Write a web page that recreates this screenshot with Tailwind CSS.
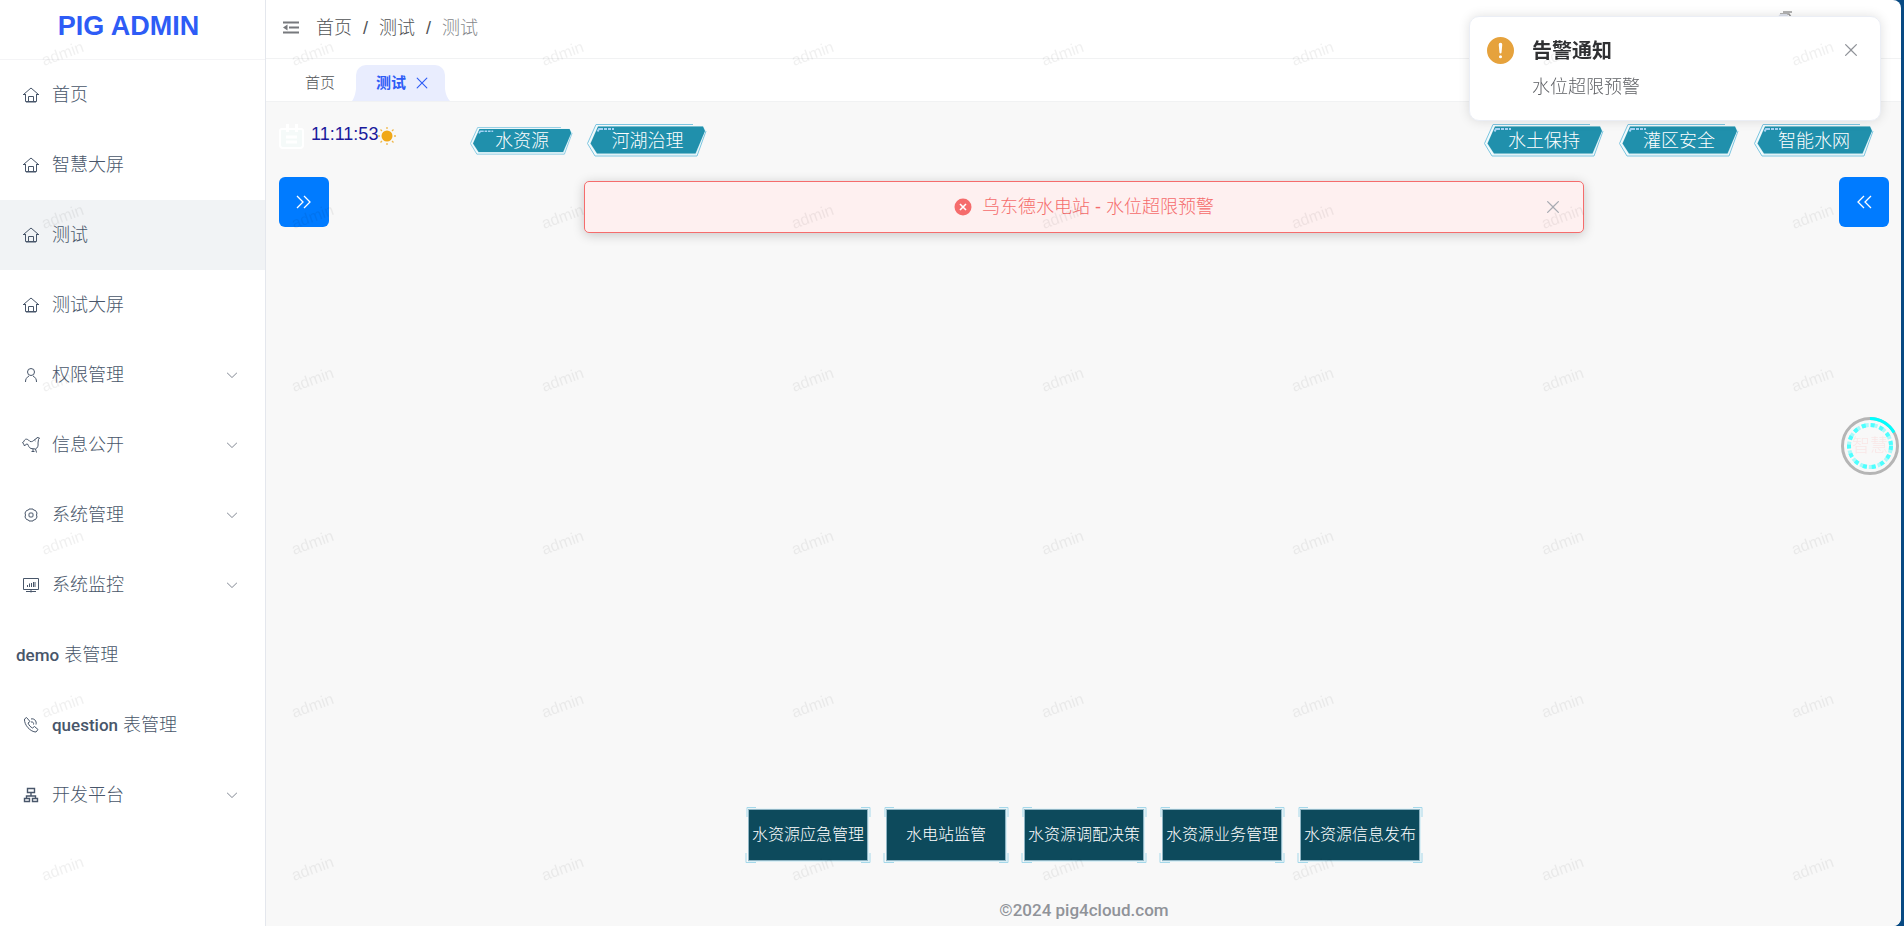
<!DOCTYPE html>
<html lang="zh-CN">
<head>
    <meta charset="UTF-8">
    <meta name="viewport" content="width=device-width, initial-scale=1.0">
    <title>PIG ADMIN</title>
    <script src="https://cdn.jsdelivr.net/npm/@tailwindcss/browser@4"></script>
</head>
<body class="min-h-screen bg-[#084a83] pr-[3px] font-['Liberation_Sans','Noto_Sans_CJK_SC',sans-serif] text-lg font-light">

    <!-- Icons -->
    <svg class="hidden">
        <symbol id="house" viewBox="0 0 18 18"><path d="M1 8.500h2.500M14.500 8.500H17M1.500 8.500 9 2l7.500 6.500M3.500 8v7.500h11V8M6.500 15.500v-5h5v5M4 16h10" fill="none" stroke="currentColor"/></symbol>
        <symbol id="user" viewBox="0 0 18 18"><path d="M3.500 16c0-3 1-4.500 3.500-6M14.500 16c0-3-1-4.500-3.500-6" fill="none" stroke="currentColor"/><circle cx="9" cy="6" r="3.500" fill="none" stroke="currentColor"/></symbol>
        <symbol id="bird" viewBox="0 0 18 18"><path d="M.5 6.500 2 5.500C2.500 3 4.500 2.500 6.500 4L8 5.500c2 .5 3.500-.5 4.500-2L14 3l1-1.500 2.500.5-1 1.500L16 7c.5 3-.5 5-2.500 6L9 12.500C6.500 11.500 6.500 9.500 6 8.500 4.500 7.500 3.500 8.500 2.500 10 2 8.500 1.500 7.500.5 6.500ZM11 13v2.500H9.500M11 15.500h1.500M13.500 13l1 3.500M12.500 4.500l1 .5" fill="none" stroke="currentColor"/></symbol>
        <symbol id="gear" viewBox="0 0 18 18"><path d="M7 3h4l.5 1 2 .5L15 7l-.5 2 .5 2-1.500 2.500-2 .5-.5 1H7l-.5-1-2-.5L3 11l.5-2L3 7l1.500-2.500 2-.5Z" fill="none" stroke="currentColor"/><rect x="7" y="7" width="4" height="4" rx="1" fill="none" stroke="currentColor"/></symbol>
        <symbol id="monitor" viewBox="0 0 18 18"><path d="M1.500 2.500h15v11h-15ZM9 13.500v3M4 15.500h10M5.500 9v2M7.500 7.500V11M9.500 7v4M11.500 6v5M13 6v5" fill="none" stroke="currentColor"/></symbol>
        <symbol id="phone" viewBox="0 0 18 18"><path d="m2.500 3 2-1.500L8 5.500 6 7c1 2.500 2.500 4 4.500 5l2-1.500 3.500 3-2 2.500C8.500 16 2 9 2.500 3ZM9 3c3-1 6 2 5 5.500M9 6c2-.5 3 1 2.500 2.500" fill="none" stroke="currentColor"/></symbol>
        <symbol id="tree" viewBox="0 0 18 18"><path d="M5.500 2.500h7v4h-7ZM2.500 12.500h5v3h-5ZM10.500 12.500h5v3h-5ZM9 6.500V10M4.500 12.500V10h9v2.500" fill="none" stroke="currentColor" stroke-width="1.400"/></symbol>
        <symbol id="down" viewBox="0 0 1024 1024"><path fill="currentColor" d="M831.872 340.864 512 652.672 192.128 340.864a30.592 30.592 0 0 0-42.752 0 29.120 29.120 0 0 0 0 41.600L489.664 714.240a32 32 0 0 0 44.672 0l340.288-331.712a29.120 29.120 0 0 0 0-41.728 30.592 30.592 0 0 0-42.752 0z"/></symbol>
        <symbol id="close" viewBox="0 0 1024 1024"><path fill="currentColor" d="M764.288 214.592 512 466.880 259.712 214.592a31.936 31.936 0 0 0-45.120 45.120L466.752 512 214.528 764.224a31.936 31.936 0 1 0 45.120 45.184L512 557.184l252.288 252.288a31.936 31.936 0 0 0 45.120-45.120L557.120 512.064l252.288-252.352a31.936 31.936 0 1 0-45.120-45.184z"/></symbol>
        <symbol id="hex" viewBox="0 0 120 33" preserveAspectRatio="none"><path d="M8 1.500h98L107 2h9l3.500 5-9.500 24.500H8L1 19.500Z" fill="#f1fafc"/><path d="M106 .5H9L.5 19.500 8 32h102l9-25" fill="none" stroke="#7cc5e0"/><path d="M11 2h105l2.500 4.500-9.500 24H10L3 19.500Z" fill="#d3ecf3"/><path d="M11 2.500h105l2 4.500-9.500 22.500H10L3.500 19.500Z" fill="#2090ac"/><path d="M10.500 7.500 12 5h4" fill="none" stroke="#a5d3f5" stroke-width="2"/><path d="M17 5h10" stroke="#a5d3f5" stroke-width="2" stroke-dasharray="3 1"/></symbol>
        <symbol id="frame" viewBox="0 0 126 58"><path d="M3 2.500h121v53.500H3Z" fill="#dbeff5"/><path d="M3 3h120v52H3Z" fill="#8fb5c4"/><path d="M4 4h118v50H4Z" fill="#0d4a5c"/><path d="M2 11V1.500h9M116 1.500h9V11M125 47v9.500h-9M11 56.500H1V47" fill="none" stroke="#a5d8ea"/></symbol>
    </svg>

    <div class="flex min-h-screen overflow-hidden rounded-r-lg bg-white">
        <aside class="w-[266px] shrink-0 border-r border-[#e4e7ed] text-[#48566a]">
            <h1 class="flex h-[60px] items-center justify-center border-b border-[#f4f4f6] pr-2 pb-2 text-[27px] font-bold text-[#2e5cf6]">PIG ADMIN</h1>
            <nav>
                <a href="#" class="flex h-[70px] items-center gap-3 px-[22px]"><svg class="size-[18px]"><use href="#house"/></svg>首页</a>
                <a href="#" class="flex h-[70px] items-center gap-3 px-[22px]"><svg class="size-[18px]"><use href="#house"/></svg>智慧大屏</a>
                <a href="#" class="flex h-[70px] items-center gap-3 bg-[#f1f3f5] px-[22px]"><svg class="size-[18px]"><use href="#house"/></svg>测试</a>
                <a href="#" class="flex h-[70px] items-center gap-3 px-[22px]"><svg class="size-[18px]"><use href="#house"/></svg>测试大屏</a>
                <a href="#" class="flex h-[70px] items-center gap-3 px-[22px]"><svg class="size-[18px]"><use href="#user"/></svg>权限管理<svg class="mr-1 ml-auto size-[14px] text-[#8a909a]"><use href="#down"/></svg></a>
                <a href="#" class="flex h-[70px] items-center gap-3 px-[22px]"><svg class="size-[18px]"><use href="#bird"/></svg>信息公开<svg class="mr-1 ml-auto size-[14px] text-[#8a909a]"><use href="#down"/></svg></a>
                <a href="#" class="flex h-[70px] items-center gap-3 px-[22px]"><svg class="size-[18px]"><use href="#gear"/></svg>系统管理<svg class="mr-1 ml-auto size-[14px] text-[#8a909a]"><use href="#down"/></svg></a>
                <a href="#" class="flex h-[70px] items-center gap-3 px-[22px]"><svg class="size-[18px]"><use href="#monitor"/></svg>系统监控<svg class="mr-1 ml-auto size-[14px] text-[#8a909a]"><use href="#down"/></svg></a>
                <a href="#" class="flex h-[70px] items-center px-4"><span><span class="font-['Roboto'] text-[17px] font-medium">demo</span> 表管理</span></a>
                <a href="#" class="flex h-[70px] items-center gap-3 px-[22px]"><svg class="size-[18px]"><use href="#phone"/></svg><span><span class="font-['Roboto'] text-[17px] font-medium">question</span> 表管理</span></a>
                <a href="#" class="flex h-[70px] items-center gap-3 px-[22px]"><svg class="size-[18px]"><use href="#tree"/></svg>开发平台<svg class="mr-1 ml-auto size-[14px] text-[#8a909a]"><use href="#down"/></svg></a>
            </nav>
        </aside>

        <div class="flex min-w-0 flex-1 flex-col">
            <header class="flex h-[59px] items-center border-b border-[#f1f2f3] px-4 pb-[3px] text-[#505255]">
                <button aria-label="折叠菜单">
                    <svg class="block size-[18px]" viewBox="0 0 18 18"><path d="M1 3.500h16M7 8.500h10M1 13.500h16" stroke="#77797d" stroke-width="2"/><path d="M5.500 5.500v6L1 8.500Z" fill="#77797d"/></svg>
                </button>
                <nav class="ml-4 flex gap-[11px]">
                    <a href="#">首页</a><span>/</span><a href="#">测试</a><span>/</span><span class="text-[#85878b]">测试</span>
                </nav>
            </header>

            <div class="flex h-[43px] items-end border-b border-[#f1f2f3] text-[15px]">
                <a href="#" class="flex h-9 items-center pr-[21px] pl-[39px] text-[#505255]">首页</a>
                <div class="relative flex h-9 items-center gap-[7px] rounded-t-[10px] bg-[#e9edfe] pr-[14px] pl-5 font-bold text-[#2e5cf6]">
                    <svg class="absolute bottom-0 -left-1 h-3 w-1" viewBox="0 0 4 12"><path d="M4 0v12H0Q3 8 4 0" fill="#e9edfe"/></svg>
                    <svg class="absolute -right-[5px] bottom-0 h-3 w-[5px]" viewBox="0 0 5 12"><path d="M0 0v12h5Q1 8 0 0" fill="#e9edfe"/></svg>
                    <a href="#">测试</a>
                    <button aria-label="关闭"><svg class="block size-[18px]"><use href="#close"/></svg></button>
                </div>
            </div>

            <main class="flex flex-1 flex-col bg-[#f8f8f8] pr-3 pl-[13px]">
                <div class="flex h-[75px] items-start pt-[18px]">
                    <div class="flex items-center text-[#1a1a9c]">
                        <svg class="size-[25px]" viewBox="0 0 25 25"><path d="M3 5h19q2 0 2 2v14q0 3-3 3H4q-3 0-3-3V7q0-2 2-2Z" fill="#f5faf9" stroke="#fff" stroke-width="2"/><path d="M8.500 0v8M17.500 0v8M7 13h11M7 18h11" stroke="#fff" stroke-width="3"/></svg>
                        <time class="ml-[7px] pb-1 font-normal">11:11:53</time>
                        <svg class="size-[18px]" viewBox="0 0 18 18"><circle cx="9" cy="9" r="5.500" fill="#f0a818"/><path d="M9 0v2M9 16v2M0 9h2M16 9h2M2.500 2.500l1.500 1.500M14 14l1.500 1.500M15.500 2.500 14 4M4 14l-1.500 1.500" stroke="#f0b84a" stroke-width="1.300"/></svg>
                    </div>
                    <div class="ml-[74px] flex items-center gap-[14px] pt-1 text-white">
                        <button class="relative h-7 w-[103px]"><svg class="absolute inset-0 size-full"><use href="#hex"/></svg><span class="relative">水资源</span></button>
                        <button class="relative h-[33px] w-[120px]"><svg class="absolute inset-0 size-full"><use href="#hex"/></svg><span class="relative">河湖治理</span></button>
                    </div>
                    <div class="ml-auto flex gap-[15px] pt-1 pr-[15px] text-white">
                        <button class="relative h-[33px] w-[120px]"><svg class="absolute inset-0 size-full"><use href="#hex"/></svg><span class="relative">水土保持</span></button>
                        <button class="relative h-[33px] w-[120px]"><svg class="absolute inset-0 size-full"><use href="#hex"/></svg><span class="relative">灌区安全</span></button>
                        <button class="relative h-[33px] w-[120px]"><svg class="absolute inset-0 size-full"><use href="#hex"/></svg><span class="relative">智能水网</span></button>
                    </div>
                </div>

                <div class="flex items-start justify-between">
                    <button aria-label="展开左侧" class="grid size-[50px] place-items-center rounded-md bg-[#007bff] text-white">
                        <svg class="size-[18px]" viewBox="0 0 18 18"><path d="m2 3 6 6-6 6M9 3l6 6-6 6" fill="none" stroke="currentColor" stroke-width="1.300"/></svg>
                    </button>
                    <div role="alert" class="relative mt-1 flex h-[52px] w-[1000px] items-center justify-center gap-[10px] rounded-[5px] border border-[#f56c6c] bg-[#fef0f0] text-[#f56c6c] shadow-[0_2px_12px_rgba(0,0,0,0.2)]">
                        <svg class="size-[18px]" viewBox="0 0 18 18"><circle cx="9" cy="9" r="8.500" fill="currentColor"/><path d="m6 6 6 6M12 6l-6 6" stroke="#fff" stroke-width="1.600"/></svg>
                        乌东德水电站 - 水位超限预警
                        <button aria-label="关闭" class="absolute right-5 text-[#a8abb2]"><svg class="block size-5"><use href="#close"/></svg></button>
                    </div>
                    <button aria-label="展开右侧" class="grid size-[50px] place-items-center rounded-md bg-[#007bff] text-white">
                        <svg class="size-[18px]" viewBox="0 0 18 18"><path d="m9 3-6 6 6 6M16 3l-6 6 6 6" fill="none" stroke="currentColor" stroke-width="1.300"/></svg>
                    </button>
                </div>

                <div class="mt-auto flex justify-center gap-3 text-base text-white">
                    <button class="relative h-[58px] w-[126px] whitespace-nowrap"><svg class="absolute inset-0 size-full"><use href="#frame"/></svg><span class="relative">水资源应急管理</span></button>
                    <button class="relative h-[58px] w-[126px] whitespace-nowrap"><svg class="absolute inset-0 size-full"><use href="#frame"/></svg><span class="relative">水电站监管</span></button>
                    <button class="relative h-[58px] w-[126px] whitespace-nowrap"><svg class="absolute inset-0 size-full"><use href="#frame"/></svg><span class="relative">水资源调配决策</span></button>
                    <button class="relative h-[58px] w-[126px] whitespace-nowrap"><svg class="absolute inset-0 size-full"><use href="#frame"/></svg><span class="relative">水资源业务管理</span></button>
                    <button class="relative h-[58px] w-[126px] whitespace-nowrap"><svg class="absolute inset-0 size-full"><use href="#frame"/></svg><span class="relative">水资源信息发布</span></button>
                </div>
                <footer class="pt-[33px] pb-[3px] text-center font-['Roboto'] text-[17px]/[26px] font-medium text-[#909399]">©2024 pig4cloud.com</footer>
            </main>
        </div>
    </div>

    <!-- Floating progress button -->
    <button class="fixed top-[417px] right-[5px] size-[58px] text-[#f9e6e6]">
        <svg class="absolute inset-0 size-full" viewBox="0 0 58 58" fill="none">
            <circle cx="29" cy="29" r="27.500" stroke="#b5b5b5" stroke-width="3"/>
            <path d="M29 1.500A27.500 27.500 0 0 1 53 15.500" stroke="#0ff" stroke-width="3"/>
            <circle cx="29" cy="29" r="21" stroke="#a9fafa" stroke-width="4" stroke-dasharray="7 2"/>
            <circle cx="29" cy="29" r="21" stroke="#4dffff" stroke-width="4" stroke-dasharray="4 5"/>
        </svg>
        <span class="relative">智慧</span>
    </button>

    <!-- Avatar peeking out above the notification -->
    <svg class="fixed top-[11px] right-[111px] h-6 w-4" viewBox="0 0 16 24"><path d="M6 1h9M3 3h9l2 3" stroke="#999" stroke-width="1.500" fill="none"/><path d="M3 3h7l2 4H0Z" fill="#dfe3ee"/></svg>

    <!-- Notification -->
    <div role="alert" class="fixed top-4 right-[23px] flex h-[105px] w-[412px] items-start rounded-[10px] border border-[#ebeef5] bg-white pt-5 pr-[19px] pl-[17px] shadow-[0_0_12px_rgba(0,0,0,0.12)]">
        <svg class="size-[27px]" viewBox="64 64 896 896"><path fill="#e6a23c" d="M512 64a448 448 0 1 1 0 896 448 448 0 0 1 0-896m0 192a58.432 58.432 0 0 0-58.240 63.744l23.360 256.384a35.072 35.072 0 0 0 69.760 0l23.296-256.384A58.432 58.432 0 0 0 512 256m0 512a51.200 51.200 0 1 0 0-102.400 51.200 51.200 0 0 0 0 102.400"/></svg>
        <div class="ml-[18px] flex-1">
            <h2 class="text-xl font-bold text-[#303133]">告警通知</h2>
            <p class="mt-2 text-[#606266]">水位超限预警</p>
        </div>
        <button aria-label="关闭" class="mt-[3px] text-[#909399]"><svg class="block size-5"><use href="#close"/></svg></button>
    </div>

    <!-- Watermark -->
    <svg class="pointer-events-none fixed inset-0 size-full" aria-hidden="true">
        <defs>
            <pattern id="mark" width="250" height="163" patternUnits="userSpaceOnUse">
                <text x="44" y="66" transform="rotate(-20 44 66)" class="fill-black/6 text-base font-normal">admin</text>
            </pattern>
        </defs>
        <rect width="100%" height="100%" fill="url(#mark)"/>
    </svg>

</body>
</html>
